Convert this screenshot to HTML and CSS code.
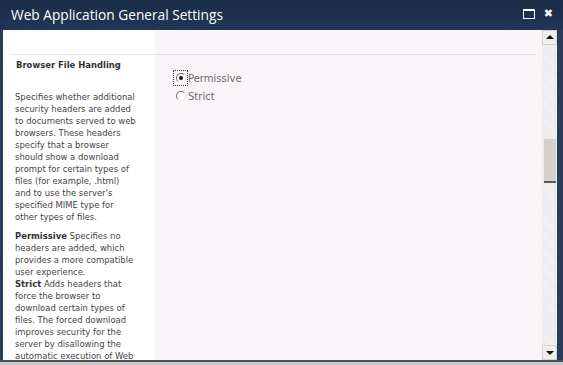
FILE: index.html
```html
<!DOCTYPE html>
<html lang="en">
<head>
    <meta charset="UTF-8">
    <title>Web Application General Settings</title>
    <link rel="stylesheet" href="styles.css">
</head>
<body>

    <div class="dialog">
        <div class="titlebar">
            <span class="title">Web Application General Settings</span>
            <span class="tb-btn maximize"></span>
            <span class="tb-btn close">&#10006;</span>
        </div>

        <div class="frame">
            <div class="content">
                <div class="col-left">
                    <div class="section">
                        <h3>Browser File Handling</h3>
                        <p>Specifies whether additional security headers are added to documents served to web browsers. These headers specify that a browser should show a download prompt for certain types of files (for example, .html) and to use the server's specified MIME type for other types of files.</p>
                        <p><b>Permissive</b> Specifies no headers are added, which provides a more compatible user experience.<br>
                        <b>Strict</b> Adds headers that force the browser to download certain types of files. The forced download improves security for the server by disallowing the automatic execution of Web content.</p>
                    </div>
                </div>
                <div class="col-right">
                    <div class="options">
                        <label class="opt"><span class="focus"><span class="radio checked"></span></span>Permissive</label>
                        <label class="opt"><span class="focus none"><span class="radio"></span></span>Strict</label>
                    </div>
                </div>
            </div>

            <div class="scrollbar">
                <div class="sb-btn up"></div>
                <div class="sb-track">
                    <div class="sb-thumb"></div>
                </div>
                <div class="sb-btn down"></div>
            </div>
        </div>
    </div>

</body>
</html>
```

FILE: styles.css
```css
* {
    margin: 0;
    padding: 0;
    box-sizing: border-box;
}
body {
    background: #c9c9c9;
    width: 563px;
    height: 365px;
    overflow: hidden;
}
.dialog {
    width: 563px;
    height: 362px;
    display: flex;
    flex-direction: column;
    background: #1b2e4a;
    border-bottom: 2px solid #4a4f57;
}
.titlebar {
    height: 30px;
    display: flex;
    align-items: center;
    padding: 0 10px 0 11px;
    background: linear-gradient(#1a2c46, #213757);
    color: #fff;
}
.title {
    font-family: "Open Sans", "Noto Sans", sans-serif;
    font-size: 13.7px;
    flex: 1;
    padding-bottom: 2px;
}
.tb-btn {
    display: inline-block;
}
.maximize {
    width: 12px;
    height: 10px;
    border: 1px solid #fff;
    border-top-width: 2px;
    margin-right: 9px;
    margin-bottom: 3px;
}
.close {
    font-family: "DejaVu Sans", sans-serif;
    font-size: 11px;
    font-weight: bold;
    margin-bottom: 3px;
}
.frame {
    flex: 1;
    display: flex;
    padding-left: 3px;
    padding-right: 6px;
    min-height: 0;
    background: #2a3d56;
}
.content {
    flex: 1;
    display: flex;
    overflow: hidden;
}
.col-left {
    width: 152px;
    background: #fff;
    padding: 24px 0 0 7px;
}
.col-right {
    flex: 1;
    background: #f8f4f7;
    padding: 24px 6px 0 0;
}
.section {
    border-top: 1px solid #e2e0e2;
    padding: 4px 0 0 5px;
    font-family: "DejaVu Sans", Verdana, sans-serif;
    font-size: 8.45px;
    line-height: 12px;
    color: #444;
}
.section h3 {
    font-size: 8.45px;
    font-weight: bold;
    color: #333;
    margin-bottom: 20px;
    padding-left: 1px;
    white-space: nowrap;
}
.section p {
    width: 14.45em;
    margin-bottom: 7px;
}
.section b {
    color: #333;
}
.options {
    border-top: 1px solid #e2e0e2;
    padding: 15px 0 0 18px;
    display: flex;
    flex-direction: column;
    gap: 2px;
}
.opt {
    display: flex;
    align-items: center;
    font-family: "DejaVu Sans", Verdana, sans-serif;
    font-size: 10px;
    color: #6b6b6b;
    height: 16px;
}
.focus {
    width: 15px;
    height: 16px;
    border: 1px dotted #333;
    display: flex;
    align-items: center;
    justify-content: center;
}
.focus.none {
    border-color: transparent;
}
.radio {
    width: 10px;
    height: 10px;
    border-radius: 50%;
    border: 1px solid;
    border-color: #6e6e6e #e4e4e4 #e4e4e4 #6e6e6e;
    background: #fff;
    position: relative;
}
.radio.checked::after {
    content: "";
    position: absolute;
    left: 2px;
    top: 2px;
    width: 4px;
    height: 4px;
    border-radius: 50%;
    background: #111;
}
.scrollbar {
    width: 15px;
    display: flex;
    flex-direction: column;
    background: #ececec;
}
.sb-btn {
    height: 15px;
    background: #f1efee;
    border: 1px solid #d6d3cf;
    position: relative;
}
.sb-btn::after {
    content: "";
    position: absolute;
    left: 3px;
    border-left: 4px solid transparent;
    border-right: 4px solid transparent;
}
.sb-btn.up::after {
    top: 4px;
    border-bottom: 4px solid #111;
}
.sb-btn.down::after {
    top: 5px;
    border-top: 4px solid #111;
}
.sb-track {
    flex: 1;
    padding-top: 93px;
    background: repeating-linear-gradient(45deg, #ebebeb 0 1px, #f2f2f2 1px 2px);
}
.sb-thumb {
    height: 45px;
    margin: 0 1px 0 2px;
    background: #d4d1cc;
    border-bottom: 2px solid #55595f;
    border-top: 1px solid #ecebe8;
}
```
